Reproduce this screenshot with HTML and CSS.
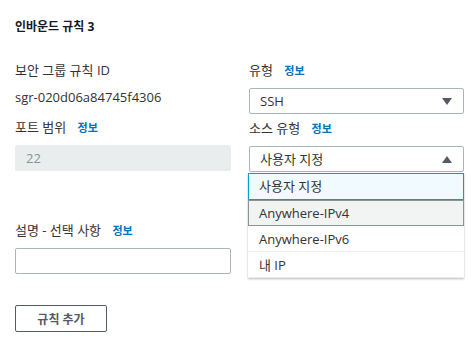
FILE: index.html
```html
<!DOCTYPE html>
<html lang="ko">

<head>
    <meta charset="utf-8">
    <title>인바운드 규칙</title>
    <link rel="stylesheet" href="styles.css">
</head>

<body>
    <h3 class="title">인바운드 규칙 3</h3>

    <div class="rule">
        <div class="col">
            <div class="label">보안 그룹 규칙 ID</div>
            <div class="value">sgr-020d06a84745f4306</div>

            <div class="label gap-port">포트 범위 <a class="info">정보</a></div>
            <div class="input disabled">22</div>

            <div class="label gap-desc">설명 - 선택 사항 <a class="info">정보</a></div>
            <div class="input"></div>

            <button class="btn">규칙 추가</button>
        </div>

        <div class="col">
            <div class="label">유형 <a class="info">정보</a></div>
            <div class="select">
                SSH
                <span class="caret down"></span>
            </div>

            <div class="label gap-source">소스 유형 <a class="info">정보</a></div>
            <div class="select open">
                사용자 지정
                <span class="caret up"></span>
                <ul class="menu">
                    <li class="selected">사용자 지정</li>
                    <li class="hover">Anywhere-IPv4</li>
                    <li>Anywhere-IPv6</li>
                    <li>내 IP</li>
                </ul>
            </div>
        </div>
    </div>
</body></html>
```

FILE: styles.css
```css
body {
    margin: 0;
    padding: 0 10px 0 15px;
    background: #ffffff;
    color: #333333;
    font-family: "Open Sans", "Noto Sans CJK KR", sans-serif;
    font-size: 13px;
}

.title {
    margin: 19px 0 0 0;
    font-size: 12px;
    line-height: 16px;
    font-weight: 700;
    color: #16191f;
}

.rule {
    display: grid;
    grid-template-columns: 216px 215px;
    column-gap: 18px;
    margin-top: 27px;
}

.col {
    display: flex;
    flex-direction: column;
    align-items: flex-start;
}

.label {
    height: 16px;
    line-height: 16px;
}

.info {
    margin-left: 8px;
    color: #0073bb;
    font-weight: 700;
    font-size: 11px;
    line-height: 1;
}

.value {
    margin-top: 11px;
    line-height: 16px;
}

.gap-port {
    margin-top: 14px;
}

.gap-desc {
    margin-top: 51px;
}

.gap-source {
    margin-top: 6px;
}

.input {
    box-sizing: border-box;
    width: 216px;
    height: 26px;
    margin-top: 10px;
    padding: 0 10px;
    line-height: 24px;
    border: 1px solid #aab7b8;
    border-radius: 2px;
}

.input.disabled {
    background: #eaeded;
    border-color: #eaeded;
    color: #879596;
}

.btn {
    margin-top: 31px;
    width: 92px;
    height: 27px;
    background: #ffffff;
    border: 1px solid #545b64;
    border-radius: 2px;
    color: #545b64;
    font-family: "Open Sans", "Noto Sans CJK KR", sans-serif;
    font-size: 12px;
    font-weight: 700;
}

.select {
    position: relative;
    box-sizing: border-box;
    width: 215px;
    height: 26px;
    margin-top: 10px;
    padding: 0 10px;
    line-height: 24px;
    border: 1px solid #aab7b8;
    border-radius: 2px;
}

.caret {
    position: absolute;
    right: 11px;
    top: 9px;
    width: 0;
    height: 0;
    border-left: 5px solid transparent;
    border-right: 5px solid transparent;
}

.caret.down {
    border-top: 7px solid #545b64;
}

.caret.up {
    border-bottom: 7px solid #545b64;
}

.menu {
    position: absolute;
    left: -2px;
    top: 26px;
    width: 216px;
    margin: 0;
    padding: 0;
    list-style: none;
    background: #ffffff;
    box-shadow: 0 1px 2px rgba(0, 28, 36, 0.3);
}

.menu li {
    box-sizing: border-box;
    height: 26px;
    padding: 0 10px;
    line-height: 24px;
    border: 1px solid transparent;
    border-bottom-color: #eaeded;
}

.menu li.selected {
    height: 27px;
    background: #f1faff;
    border: 1px solid #00a1c9;
}

.menu li.hover {
    background: #f2f3f3;
    border: 1px solid #879596;
}
```
